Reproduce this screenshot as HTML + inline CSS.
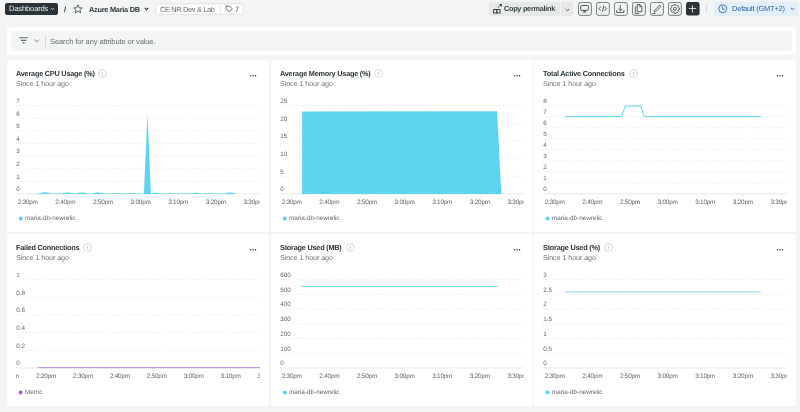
<!DOCTYPE html>
<html><head><meta charset="utf-8"><style>
html,body{margin:0;padding:0;}
body{text-rendering:geometricPrecision;width:800px;height:412px;overflow:hidden;background:#f3f4f4;position:relative;font-family:"Liberation Sans", sans-serif;}
.t{position:absolute;white-space:nowrap;will-change:transform;}
.box{position:absolute;}
.ic{position:absolute;overflow:hidden;will-change:transform;}
</style></head><body>
<div class="box" style="left:5px;top:3.1px;width:53.1px;height:11.5px;background:#293338;border-radius:2px"></div>
<div class="t" style="left:9.00px;top:5.37px;font-size:7.6px;line-height:7.6px;color:#eef0f0;font-weight:400;letter-spacing:-0.17px;">Dashboards</div>
<svg class="ic" style="left:50px;top:7px" width="5" height="4" viewBox="0 0 5 4"><path d="M1 1.2 L2.5 2.7 L4 1.2" fill="none" stroke="#fff" stroke-width="0.8"/></svg>
<div class="t" style="left:63.60px;top:5.57px;font-size:7.6px;line-height:7.6px;color:#293338;font-weight:700;letter-spacing:0px;">/</div>
<svg class="ic" style="left:72.5px;top:4.2px" width="10" height="10" viewBox="0 0 24 24"><path d="M12 2 L14.9 8.9 L22.2 9.4 L16.6 14.1 L18.4 21.4 L12 17.4 L5.6 21.4 L7.4 14.1 L1.8 9.4 L9.1 8.9 Z" fill="none" stroke="#293338" stroke-width="1.7" stroke-linejoin="round"/></svg>
<div class="t" style="left:89.00px;top:5.62px;font-size:7.3px;line-height:7.3px;color:#293338;font-weight:700;letter-spacing:-0.22px;">Azure Maria DB</div>
<svg class="ic" style="left:143.5px;top:7px" width="5" height="4" viewBox="0 0 5 4"><path d="M0.8 1 L2.5 2.8 L4.2 1" fill="none" stroke="#293338" stroke-width="1.1"/></svg>
<svg class="ic" style="left:155px;top:3px" width="89" height="12" viewBox="0 0 89 12"><rect x="0.8" y="0.75" width="87.5" height="10.5" rx="1.5" fill="#fff" stroke="#d9dcdc" stroke-width="0.8"/><path d="M65.5 2.2 V9.5" stroke="#dcdfdf" stroke-width="0.8"/><path d="M71.0 3.0 H74.5 L77.3 5.9 L74.3 8.8 L71.0 5.6 Z" fill="none" stroke="#5a6366" stroke-width="0.9" stroke-linejoin="round"/></svg>
<div class="t" style="left:160.00px;top:5.74px;font-size:7.4px;line-height:7.4px;color:#646c6f;font-weight:400;letter-spacing:-0.33px;">CE NR Dev &amp; Lab</div>
<div class="t" style="left:234.60px;top:5.57px;font-size:7.6px;line-height:7.6px;color:#5a6366;font-weight:400;letter-spacing:0px;">7</div>
<div class="box" style="left:489px;top:2.25px;width:84px;height:13.6px;background:#e7e9e9;border-radius:2.5px"></div>
<div class="box" style="left:559.7px;top:2.25px;width:0.7px;height:13.6px;background:#f3f4f4"></div>
<svg class="ic" style="left:490px;top:2px" width="14" height="14" viewBox="0 0 14 14"><rect x="3.6" y="7.5" width="3.2" height="3.5" fill="none" stroke="#3a4448" stroke-width="1"/><rect x="6.8" y="7.5" width="3.2" height="3.5" fill="none" stroke="#3a4448" stroke-width="1"/><path d="M8.1 5.7 L10.9 2.9" stroke="#3a4448" stroke-width="0.9"/><path d="M9.0 2.2 L11.9 2.1 L11.8 5.0 Z" fill="#3a4448"/></svg>
<div class="t" style="left:504.40px;top:5.42px;font-size:7.3px;line-height:7.3px;color:#3a4448;font-weight:700;letter-spacing:-0.27px;">Copy permalink</div>
<svg class="ic" style="left:564.5px;top:7.5px" width="5" height="4" viewBox="0 0 5 4"><path d="M0.8 1 L2.5 2.7 L4.2 1" fill="none" stroke="#3a4448" stroke-width="0.9"/></svg>
<svg class="ic" style="left:578.0px;top:2px" width="14" height="14" viewBox="0 0 14 14"><rect x="0.45" y="0.45" width="12.9" height="12.9" rx="2.2" fill="none" stroke="#6b7171" stroke-width="0.9"/><rect x="2.75" y="3.55" width="7.6" height="4.8" rx="0.7" fill="none" stroke="#4a5356" stroke-width="1"/><path d="M4.3 10.6 L6.55 8.6 L8.8 10.6 Z" fill="#4a5356"/></svg>
<svg class="ic" style="left:596.0px;top:2px" width="14" height="14" viewBox="0 0 14 14"><rect x="0.45" y="0.45" width="12.9" height="12.9" rx="2.2" fill="none" stroke="#6b7171" stroke-width="0.9"/><path d="M4.9 4.6 L2.9 6.7 L4.9 8.8 M8.5 4.6 L10.5 6.7 L8.5 8.8 M7.7 3.6 L6.5 9.7" fill="none" stroke="#4a5356" stroke-width="0.95"/></svg>
<svg class="ic" style="left:614.1px;top:2px" width="14" height="14" viewBox="0 0 14 14"><rect x="0.45" y="0.45" width="12.9" height="12.9" rx="2.2" fill="none" stroke="#6b7171" stroke-width="0.9"/><path d="M6.25 3.2 V8.6 M4.4 6.8 L6.25 8.65 L8.1 6.8 M2.7 8 V10.4 H9.95 V8" fill="none" stroke="#4a5356" stroke-width="0.95"/></svg>
<svg class="ic" style="left:632.0px;top:2px" width="14" height="14" viewBox="0 0 14 14"><rect x="0.45" y="0.45" width="12.9" height="12.9" rx="2.2" fill="none" stroke="#6b7171" stroke-width="0.9"/><path d="M5.2 2.55 H7.8 L9.9 4.65 V9.7 H5.2 Z M7.8 2.55 V4.65 H9.9" fill="none" stroke="#4a5356" stroke-width="0.95" stroke-linejoin="round"/><path d="M3.25 4.3 V11.6 H7.2" fill="none" stroke="#4a5356" stroke-width="0.9"/></svg>
<svg class="ic" style="left:650.1px;top:2px" width="14" height="14" viewBox="0 0 14 14"><rect x="0.45" y="0.45" width="12.9" height="12.9" rx="2.2" fill="none" stroke="#6b7171" stroke-width="0.9"/><path d="M4.1 10.0 L4.5 8.3 L9.7 3.1 L11.0 4.4 L5.8 9.6 Z" fill="none" stroke="#4a5356" stroke-width="0.9" stroke-linejoin="round"/><path d="M2.3 11.5 H5.4" stroke="#4a5356" stroke-width="0.9"/></svg>
<svg class="ic" style="left:668.0px;top:2px" width="14" height="14" viewBox="0 0 14 14"><rect x="0.45" y="0.45" width="12.9" height="12.9" rx="2.2" fill="none" stroke="#6b7171" stroke-width="0.9"/><path d="M10.29 5.85 L11.38 6.13 L11.38 7.67 L10.29 7.95 L10.04 8.56 L10.62 9.53 L9.53 10.62 L8.56 10.04 L7.95 10.29 L7.67 11.38 L6.13 11.38 L5.85 10.29 L5.24 10.04 L4.27 10.62 L3.18 9.53 L3.76 8.56 L3.51 7.95 L2.42 7.67 L2.42 6.13 L3.51 5.85 L3.76 5.24 L3.18 4.27 L4.27 3.18 L5.24 3.76 L5.85 3.51 L6.13 2.42 L7.67 2.42 L7.95 3.51 L8.56 3.76 L9.53 3.18 L10.62 4.27 L10.04 5.24 Z" fill="none" stroke="#4a5356" stroke-width="0.9" stroke-linejoin="round"/><circle cx="6.9" cy="6.9" r="1.5" fill="none" stroke="#4a5356" stroke-width="0.9"/></svg>
<svg class="ic" style="left:686.1px;top:2.05px" width="14" height="14" viewBox="0 0 14 14"><rect x="0" y="0" width="13.6" height="13.55" rx="2.4" fill="#293338"/><path d="M6.45 3.2 V10.7 M2.9 6.45 H10.1" stroke="#e8eaea" stroke-width="0.9"/></svg>
<div class="box" style="left:706.2px;top:4.5px;width:0.7px;height:8.5px;background:#d6d9d9"></div>
<div class="box" style="left:714px;top:2.25px;width:84px;height:13.3px;background:#e3eefb;border-radius:2.5px"></div>
<svg class="ic" style="left:717.5px;top:3.9px" width="9.5" height="9.5" viewBox="0 0 20 20"><circle cx="10" cy="10" r="8.3" fill="none" stroke="#2f64a8" stroke-width="1.8"/><path d="M9.5 5 V11 H14" fill="none" stroke="#2f64a8" stroke-width="1.8"/></svg>
<div class="t" style="left:732.00px;top:5.04px;font-size:7.4px;line-height:7.4px;color:#2f5f9f;font-weight:400;letter-spacing:-0.16px;">Default (GMT+2)</div>
<svg class="ic" style="left:789.5px;top:7px" width="5" height="4" viewBox="0 0 5 4"><path d="M0.8 1 L2.5 2.7 L4.2 1" fill="none" stroke="#2f5f9f" stroke-width="0.9"/></svg>
<div class="box" style="left:7px;top:27px;width:789px;height:27.8px;background:#fff;border-radius:3px"></div>
<div class="box" style="left:11px;top:31px;width:780.5px;height:20px;background:#f3f4f4;border-radius:2px"></div>
<svg class="ic" style="left:18.5px;top:37px" width="9" height="7" viewBox="0 0 9 7"><path d="M0.2 0.75 H9 M1.9 3.3 H7.3 M3.5 5.85 H5.7" stroke="#646c6f" stroke-width="1.2"/></svg>
<svg class="ic" style="left:34px;top:39px" width="5.5" height="3.5" viewBox="0 0 5.5 3.5"><path d="M0.4 0.5 L2.75 2.9 L5.1 0.5" fill="none" stroke="#5a6366" stroke-width="0.8"/></svg>
<div class="box" style="left:45.4px;top:34.5px;width:0.8px;height:13px;background:#dcdfdf"></div>
<div class="t" style="left:49.50px;top:37.77px;font-size:7.6px;line-height:7.6px;color:#6b7274;font-weight:400;letter-spacing:-0.14px;">Search for any attribute or value.</div>
<div class="box" style="left:7.0px;top:59.75px;width:261.8px;height:172.0px;background:#fff;border-radius:3px"></div>
<div class="t" style="left:16.00px;top:69.87px;font-size:7.3px;line-height:7.3px;color:#293338;font-weight:700;letter-spacing:-0.22px;">Average CPU Usage (%)</div>
<svg class="ic" style="left:98.03px;top:68.60px" width="9" height="9" viewBox="0 0 9 9"><circle cx="4.5" cy="4.5" r="3.95" fill="none" stroke="#c9cdcd" stroke-width="0.75"/><path d="M4.4 2.85 V6.5" stroke="#bfc3c3" stroke-width="0.85"/></svg>
<div class="t" style="left:16.00px;top:80.84px;font-size:7.1px;line-height:7.1px;color:#6b7274;font-weight:400;letter-spacing:-0.05px;">Since 1 hour ago</div>
<svg class="ic" style="left:248.00px;top:72.50px" width="10" height="5" viewBox="0 0 10 5"><circle cx="2.6" cy="2.65" r="0.75" fill="#293338"/><circle cx="5.05" cy="2.65" r="0.75" fill="#293338"/><circle cx="7.5" cy="2.65" r="0.75" fill="#293338"/></svg>
<svg class="ic" style="left:16.0px;top:97.75px;font-family:"Liberation Sans", sans-serif" width="244" height="112" viewBox="0 0 244 112"><line x1="0" y1="7.60" x2="243.5" y2="7.60" stroke="#e2e5e5" stroke-width="0.9" stroke-dasharray="1.1 2.23" stroke-dashoffset="0.5"/><text x="0.3" y="5.00" font-size="6.3" fill="#5f676a">7</text><line x1="0" y1="20.22" x2="243.5" y2="20.22" stroke="#e2e5e5" stroke-width="0.9" stroke-dasharray="1.1 2.23" stroke-dashoffset="0.5"/><text x="0.3" y="17.62" font-size="6.3" fill="#5f676a">6</text><line x1="0" y1="32.84" x2="243.5" y2="32.84" stroke="#e2e5e5" stroke-width="0.9" stroke-dasharray="1.1 2.23" stroke-dashoffset="0.5"/><text x="0.3" y="30.24" font-size="6.3" fill="#5f676a">5</text><line x1="0" y1="45.46" x2="243.5" y2="45.46" stroke="#e2e5e5" stroke-width="0.9" stroke-dasharray="1.1 2.23" stroke-dashoffset="0.5"/><text x="0.3" y="42.86" font-size="6.3" fill="#5f676a">4</text><line x1="0" y1="58.09" x2="243.5" y2="58.09" stroke="#e2e5e5" stroke-width="0.9" stroke-dasharray="1.1 2.23" stroke-dashoffset="0.5"/><text x="0.3" y="55.49" font-size="6.3" fill="#5f676a">3</text><line x1="0" y1="70.71" x2="243.5" y2="70.71" stroke="#e2e5e5" stroke-width="0.9" stroke-dasharray="1.1 2.23" stroke-dashoffset="0.5"/><text x="0.3" y="68.11" font-size="6.3" fill="#5f676a">2</text><line x1="0" y1="83.33" x2="243.5" y2="83.33" stroke="#e2e5e5" stroke-width="0.9" stroke-dasharray="1.1 2.23" stroke-dashoffset="0.5"/><text x="0.3" y="80.73" font-size="6.3" fill="#5f676a">1</text><line x1="0" y1="95.95" x2="243.5" y2="95.95" stroke="#e6e8e8" stroke-width="1"/><text x="0.3" y="93.35" font-size="6.3" fill="#5f676a">0</text><line x1="11.70" y1="96.45" x2="11.70" y2="97.95" stroke="#e0e3e3" stroke-width="0.6"/><text x="11.70" y="106.35" font-size="6.4" fill="#5f676a" text-anchor="middle" letter-spacing="-0.22">2:30pm</text><line x1="49.33" y1="96.45" x2="49.33" y2="97.95" stroke="#e0e3e3" stroke-width="0.6"/><text x="49.33" y="106.35" font-size="6.4" fill="#5f676a" text-anchor="middle" letter-spacing="-0.22">2:40pm</text><line x1="86.96" y1="96.45" x2="86.96" y2="97.95" stroke="#e0e3e3" stroke-width="0.6"/><text x="86.96" y="106.35" font-size="6.4" fill="#5f676a" text-anchor="middle" letter-spacing="-0.22">2:50pm</text><line x1="124.59" y1="96.45" x2="124.59" y2="97.95" stroke="#e0e3e3" stroke-width="0.6"/><text x="124.59" y="106.35" font-size="6.4" fill="#5f676a" text-anchor="middle" letter-spacing="-0.22">3:00pm</text><line x1="162.22" y1="96.45" x2="162.22" y2="97.95" stroke="#e0e3e3" stroke-width="0.6"/><text x="162.22" y="106.35" font-size="6.4" fill="#5f676a" text-anchor="middle" letter-spacing="-0.22">3:10pm</text><line x1="199.85" y1="96.45" x2="199.85" y2="97.95" stroke="#e0e3e3" stroke-width="0.6"/><text x="199.85" y="106.35" font-size="6.4" fill="#5f676a" text-anchor="middle" letter-spacing="-0.22">3:20pm</text><line x1="237.48" y1="96.45" x2="237.48" y2="97.95" stroke="#e0e3e3" stroke-width="0.6"/><text x="237.48" y="106.35" font-size="6.4" fill="#5f676a" text-anchor="middle" letter-spacing="-0.22">3:30pm</text><path d="M20.00 95.95 L23.00 95.60 Q29.00 93.09 35.00 95.60 L45.70 95.60 Q51.70 93.31 57.70 95.60 L59.70 95.60 Q65.70 93.31 71.70 95.60 L76.00 95.60 Q82.00 93.31 88.00 95.60 L94.00 95.60 Q100.00 94.19 106.00 95.60 L110.50 95.60 Q116.50 94.41 122.50 95.60 L127.90 95.55 L131.50 16.25 L134.90 95.55 L135.40 95.60 Q140.40 93.75 145.40 95.60 L150.25 95.60 Q155.25 94.19 160.25 95.60 L174.50 95.60 Q179.50 93.75 184.50 95.60 L189.30 95.60 Q194.30 94.41 199.30 95.60 L208.80 95.60 Q213.80 93.53 218.80 95.60 L220.00 95.95 Z" fill="#5dd3ef"/></svg>
<svg class="ic" style="left:18.00px;top:215.75px" width="6" height="6" viewBox="0 0 6 6"><circle cx="2.6" cy="2.55" r="2" fill="#5dd3ef"/></svg>
<div class="t" style="left:25.10px;top:215.52px;font-size:6.3px;line-height:6.3px;color:#5f676a;font-weight:400;letter-spacing:0.03px;">maria-db-newrelic</div>
<div class="box" style="left:270.9px;top:59.75px;width:261.8px;height:172.0px;background:#fff;border-radius:3px"></div>
<div class="t" style="left:279.90px;top:69.87px;font-size:7.3px;line-height:7.3px;color:#293338;font-weight:700;letter-spacing:-0.22px;">Average Memory Usage (%)</div>
<svg class="ic" style="left:374.23px;top:68.60px" width="9" height="9" viewBox="0 0 9 9"><circle cx="4.5" cy="4.5" r="3.95" fill="none" stroke="#c9cdcd" stroke-width="0.75"/><path d="M4.4 2.85 V6.5" stroke="#bfc3c3" stroke-width="0.85"/></svg>
<div class="t" style="left:279.90px;top:80.84px;font-size:7.1px;line-height:7.1px;color:#6b7274;font-weight:400;letter-spacing:-0.05px;">Since 1 hour ago</div>
<svg class="ic" style="left:511.90px;top:72.50px" width="10" height="5" viewBox="0 0 10 5"><circle cx="2.6" cy="2.65" r="0.75" fill="#293338"/><circle cx="5.05" cy="2.65" r="0.75" fill="#293338"/><circle cx="7.5" cy="2.65" r="0.75" fill="#293338"/></svg>
<svg class="ic" style="left:279.9px;top:97.75px;font-family:"Liberation Sans", sans-serif" width="244" height="112" viewBox="0 0 244 112"><line x1="0" y1="7.60" x2="243.5" y2="7.60" stroke="#e2e5e5" stroke-width="0.9" stroke-dasharray="1.1 2.23" stroke-dashoffset="0.5"/><text x="0.3" y="5.00" font-size="6.3" fill="#5f676a">25</text><line x1="0" y1="25.27" x2="243.5" y2="25.27" stroke="#e2e5e5" stroke-width="0.9" stroke-dasharray="1.1 2.23" stroke-dashoffset="0.5"/><text x="0.3" y="22.67" font-size="6.3" fill="#5f676a">20</text><line x1="0" y1="42.94" x2="243.5" y2="42.94" stroke="#e2e5e5" stroke-width="0.9" stroke-dasharray="1.1 2.23" stroke-dashoffset="0.5"/><text x="0.3" y="40.34" font-size="6.3" fill="#5f676a">15</text><line x1="0" y1="60.61" x2="243.5" y2="60.61" stroke="#e2e5e5" stroke-width="0.9" stroke-dasharray="1.1 2.23" stroke-dashoffset="0.5"/><text x="0.3" y="58.01" font-size="6.3" fill="#5f676a">10</text><line x1="0" y1="78.28" x2="243.5" y2="78.28" stroke="#e2e5e5" stroke-width="0.9" stroke-dasharray="1.1 2.23" stroke-dashoffset="0.5"/><text x="0.3" y="75.68" font-size="6.3" fill="#5f676a">5</text><line x1="0" y1="95.95" x2="243.5" y2="95.95" stroke="#e6e8e8" stroke-width="1"/><text x="0.3" y="93.35" font-size="6.3" fill="#5f676a">0</text><line x1="11.70" y1="96.45" x2="11.70" y2="97.95" stroke="#e0e3e3" stroke-width="0.6"/><text x="11.70" y="106.35" font-size="6.4" fill="#5f676a" text-anchor="middle" letter-spacing="-0.22">2:30pm</text><line x1="49.33" y1="96.45" x2="49.33" y2="97.95" stroke="#e0e3e3" stroke-width="0.6"/><text x="49.33" y="106.35" font-size="6.4" fill="#5f676a" text-anchor="middle" letter-spacing="-0.22">2:40pm</text><line x1="86.96" y1="96.45" x2="86.96" y2="97.95" stroke="#e0e3e3" stroke-width="0.6"/><text x="86.96" y="106.35" font-size="6.4" fill="#5f676a" text-anchor="middle" letter-spacing="-0.22">2:50pm</text><line x1="124.59" y1="96.45" x2="124.59" y2="97.95" stroke="#e0e3e3" stroke-width="0.6"/><text x="124.59" y="106.35" font-size="6.4" fill="#5f676a" text-anchor="middle" letter-spacing="-0.22">3:00pm</text><line x1="162.22" y1="96.45" x2="162.22" y2="97.95" stroke="#e0e3e3" stroke-width="0.6"/><text x="162.22" y="106.35" font-size="6.4" fill="#5f676a" text-anchor="middle" letter-spacing="-0.22">3:10pm</text><line x1="199.85" y1="96.45" x2="199.85" y2="97.95" stroke="#e0e3e3" stroke-width="0.6"/><text x="199.85" y="106.35" font-size="6.4" fill="#5f676a" text-anchor="middle" letter-spacing="-0.22">3:20pm</text><line x1="237.48" y1="96.45" x2="237.48" y2="97.95" stroke="#e0e3e3" stroke-width="0.6"/><text x="237.48" y="106.35" font-size="6.4" fill="#5f676a" text-anchor="middle" letter-spacing="-0.22">3:30pm</text><path d="M22.10 95.95 L22.10 13.55 L217.10 13.25 L221.30 95.95 Z" fill="#5dd3ef"/></svg>
<svg class="ic" style="left:281.90px;top:215.75px" width="6" height="6" viewBox="0 0 6 6"><circle cx="2.6" cy="2.55" r="2" fill="#5dd3ef"/></svg>
<div class="t" style="left:289.00px;top:215.52px;font-size:6.3px;line-height:6.3px;color:#5f676a;font-weight:400;letter-spacing:0.03px;">maria-db-newrelic</div>
<div class="box" style="left:534.2px;top:59.75px;width:261.8px;height:172.0px;background:#fff;border-radius:3px"></div>
<div class="t" style="left:543.20px;top:69.87px;font-size:7.3px;line-height:7.3px;color:#293338;font-weight:700;letter-spacing:-0.22px;">Total Active Connections</div>
<svg class="ic" style="left:628.93px;top:68.60px" width="9" height="9" viewBox="0 0 9 9"><circle cx="4.5" cy="4.5" r="3.95" fill="none" stroke="#c9cdcd" stroke-width="0.75"/><path d="M4.4 2.85 V6.5" stroke="#bfc3c3" stroke-width="0.85"/></svg>
<div class="t" style="left:543.20px;top:80.84px;font-size:7.1px;line-height:7.1px;color:#6b7274;font-weight:400;letter-spacing:-0.05px;">Since 1 hour ago</div>
<svg class="ic" style="left:775.20px;top:72.50px" width="10" height="5" viewBox="0 0 10 5"><circle cx="2.6" cy="2.65" r="0.75" fill="#293338"/><circle cx="5.05" cy="2.65" r="0.75" fill="#293338"/><circle cx="7.5" cy="2.65" r="0.75" fill="#293338"/></svg>
<svg class="ic" style="left:543.2px;top:97.75px;font-family:"Liberation Sans", sans-serif" width="244" height="112" viewBox="0 0 244 112"><line x1="0" y1="7.60" x2="243.5" y2="7.60" stroke="#e2e5e5" stroke-width="0.9" stroke-dasharray="1.1 2.23" stroke-dashoffset="0.5"/><text x="0.3" y="5.00" font-size="6.3" fill="#5f676a">8</text><line x1="0" y1="18.64" x2="243.5" y2="18.64" stroke="#e2e5e5" stroke-width="0.9" stroke-dasharray="1.1 2.23" stroke-dashoffset="0.5"/><text x="0.3" y="16.04" font-size="6.3" fill="#5f676a">7</text><line x1="0" y1="29.69" x2="243.5" y2="29.69" stroke="#e2e5e5" stroke-width="0.9" stroke-dasharray="1.1 2.23" stroke-dashoffset="0.5"/><text x="0.3" y="27.09" font-size="6.3" fill="#5f676a">6</text><line x1="0" y1="40.73" x2="243.5" y2="40.73" stroke="#e2e5e5" stroke-width="0.9" stroke-dasharray="1.1 2.23" stroke-dashoffset="0.5"/><text x="0.3" y="38.13" font-size="6.3" fill="#5f676a">5</text><line x1="0" y1="51.77" x2="243.5" y2="51.77" stroke="#e2e5e5" stroke-width="0.9" stroke-dasharray="1.1 2.23" stroke-dashoffset="0.5"/><text x="0.3" y="49.17" font-size="6.3" fill="#5f676a">4</text><line x1="0" y1="62.82" x2="243.5" y2="62.82" stroke="#e2e5e5" stroke-width="0.9" stroke-dasharray="1.1 2.23" stroke-dashoffset="0.5"/><text x="0.3" y="60.22" font-size="6.3" fill="#5f676a">3</text><line x1="0" y1="73.86" x2="243.5" y2="73.86" stroke="#e2e5e5" stroke-width="0.9" stroke-dasharray="1.1 2.23" stroke-dashoffset="0.5"/><text x="0.3" y="71.26" font-size="6.3" fill="#5f676a">2</text><line x1="0" y1="84.91" x2="243.5" y2="84.91" stroke="#e2e5e5" stroke-width="0.9" stroke-dasharray="1.1 2.23" stroke-dashoffset="0.5"/><text x="0.3" y="82.31" font-size="6.3" fill="#5f676a">1</text><line x1="0" y1="95.95" x2="243.5" y2="95.95" stroke="#e6e8e8" stroke-width="1"/><text x="0.3" y="93.35" font-size="6.3" fill="#5f676a">0</text><line x1="11.70" y1="96.45" x2="11.70" y2="97.95" stroke="#e0e3e3" stroke-width="0.6"/><text x="11.70" y="106.35" font-size="6.4" fill="#5f676a" text-anchor="middle" letter-spacing="-0.22">2:30pm</text><line x1="49.33" y1="96.45" x2="49.33" y2="97.95" stroke="#e0e3e3" stroke-width="0.6"/><text x="49.33" y="106.35" font-size="6.4" fill="#5f676a" text-anchor="middle" letter-spacing="-0.22">2:40pm</text><line x1="86.96" y1="96.45" x2="86.96" y2="97.95" stroke="#e0e3e3" stroke-width="0.6"/><text x="86.96" y="106.35" font-size="6.4" fill="#5f676a" text-anchor="middle" letter-spacing="-0.22">2:50pm</text><line x1="124.59" y1="96.45" x2="124.59" y2="97.95" stroke="#e0e3e3" stroke-width="0.6"/><text x="124.59" y="106.35" font-size="6.4" fill="#5f676a" text-anchor="middle" letter-spacing="-0.22">3:00pm</text><line x1="162.22" y1="96.45" x2="162.22" y2="97.95" stroke="#e0e3e3" stroke-width="0.6"/><text x="162.22" y="106.35" font-size="6.4" fill="#5f676a" text-anchor="middle" letter-spacing="-0.22">3:10pm</text><line x1="199.85" y1="96.45" x2="199.85" y2="97.95" stroke="#e0e3e3" stroke-width="0.6"/><text x="199.85" y="106.35" font-size="6.4" fill="#5f676a" text-anchor="middle" letter-spacing="-0.22">3:20pm</text><line x1="237.48" y1="96.45" x2="237.48" y2="97.95" stroke="#e0e3e3" stroke-width="0.6"/><text x="237.48" y="106.35" font-size="6.4" fill="#5f676a" text-anchor="middle" letter-spacing="-0.22">3:30pm</text><path d="M21.80 18.64 L78.70 18.64 L82.30 7.90 L97.70 7.90 L101.30 18.64 L218.00 18.64" fill="none" stroke="#5dd3ef" stroke-width="1"/></svg>
<svg class="ic" style="left:545.20px;top:215.75px" width="6" height="6" viewBox="0 0 6 6"><circle cx="2.6" cy="2.55" r="2" fill="#5dd3ef"/></svg>
<div class="t" style="left:552.30px;top:215.52px;font-size:6.3px;line-height:6.3px;color:#5f676a;font-weight:400;letter-spacing:0.03px;">maria-db-newrelic</div>
<div class="box" style="left:7.0px;top:233.9px;width:261.8px;height:172.0px;background:#fff;border-radius:3px"></div>
<div class="t" style="left:16.00px;top:244.02px;font-size:7.3px;line-height:7.3px;color:#293338;font-weight:700;letter-spacing:-0.22px;">Failed Connections</div>
<svg class="ic" style="left:82.93px;top:242.75px" width="9" height="9" viewBox="0 0 9 9"><circle cx="4.5" cy="4.5" r="3.95" fill="none" stroke="#c9cdcd" stroke-width="0.75"/><path d="M4.4 2.85 V6.5" stroke="#bfc3c3" stroke-width="0.85"/></svg>
<div class="t" style="left:16.00px;top:254.99px;font-size:7.1px;line-height:7.1px;color:#6b7274;font-weight:400;letter-spacing:-0.05px;">Since 1 hour ago</div>
<svg class="ic" style="left:248.00px;top:246.65px" width="10" height="5" viewBox="0 0 10 5"><circle cx="2.6" cy="2.65" r="0.75" fill="#293338"/><circle cx="5.05" cy="2.65" r="0.75" fill="#293338"/><circle cx="7.5" cy="2.65" r="0.75" fill="#293338"/></svg>
<svg class="ic" style="left:16.0px;top:271.9px;font-family:"Liberation Sans", sans-serif" width="244" height="112" viewBox="0 0 244 112"><line x1="0" y1="7.60" x2="243.5" y2="7.60" stroke="#e2e5e5" stroke-width="0.9" stroke-dasharray="1.1 2.23" stroke-dashoffset="0.5"/><text x="0.3" y="5.00" font-size="6.3" fill="#5f676a">1</text><line x1="0" y1="25.27" x2="243.5" y2="25.27" stroke="#e2e5e5" stroke-width="0.9" stroke-dasharray="1.1 2.23" stroke-dashoffset="0.5"/><text x="0.3" y="22.67" font-size="6.3" fill="#5f676a">0.8</text><line x1="0" y1="42.94" x2="243.5" y2="42.94" stroke="#e2e5e5" stroke-width="0.9" stroke-dasharray="1.1 2.23" stroke-dashoffset="0.5"/><text x="0.3" y="40.34" font-size="6.3" fill="#5f676a">0.6</text><line x1="0" y1="60.61" x2="243.5" y2="60.61" stroke="#e2e5e5" stroke-width="0.9" stroke-dasharray="1.1 2.23" stroke-dashoffset="0.5"/><text x="0.3" y="58.01" font-size="6.3" fill="#5f676a">0.4</text><line x1="0" y1="78.28" x2="243.5" y2="78.28" stroke="#e2e5e5" stroke-width="0.9" stroke-dasharray="1.1 2.23" stroke-dashoffset="0.5"/><text x="0.3" y="75.68" font-size="6.3" fill="#5f676a">0.2</text><line x1="0" y1="95.95" x2="243.5" y2="95.95" stroke="#e6e8e8" stroke-width="1"/><text x="0.3" y="93.35" font-size="6.3" fill="#5f676a">0</text><line x1="-6.80" y1="96.45" x2="-6.80" y2="97.95" stroke="#e0e3e3" stroke-width="0.6"/><text x="-6.80" y="106.35" font-size="6.4" fill="#5f676a" text-anchor="middle" letter-spacing="-0.22">2:10pm</text><line x1="30.10" y1="96.45" x2="30.10" y2="97.95" stroke="#e0e3e3" stroke-width="0.6"/><text x="30.10" y="106.35" font-size="6.4" fill="#5f676a" text-anchor="middle" letter-spacing="-0.22">2:20pm</text><line x1="67.00" y1="96.45" x2="67.00" y2="97.95" stroke="#e0e3e3" stroke-width="0.6"/><text x="67.00" y="106.35" font-size="6.4" fill="#5f676a" text-anchor="middle" letter-spacing="-0.22">2:30pm</text><line x1="103.90" y1="96.45" x2="103.90" y2="97.95" stroke="#e0e3e3" stroke-width="0.6"/><text x="103.90" y="106.35" font-size="6.4" fill="#5f676a" text-anchor="middle" letter-spacing="-0.22">2:40pm</text><line x1="140.80" y1="96.45" x2="140.80" y2="97.95" stroke="#e0e3e3" stroke-width="0.6"/><text x="140.80" y="106.35" font-size="6.4" fill="#5f676a" text-anchor="middle" letter-spacing="-0.22">2:50pm</text><line x1="177.70" y1="96.45" x2="177.70" y2="97.95" stroke="#e0e3e3" stroke-width="0.6"/><text x="177.70" y="106.35" font-size="6.4" fill="#5f676a" text-anchor="middle" letter-spacing="-0.22">3:00pm</text><line x1="214.60" y1="96.45" x2="214.60" y2="97.95" stroke="#e0e3e3" stroke-width="0.6"/><text x="214.60" y="106.35" font-size="6.4" fill="#5f676a" text-anchor="middle" letter-spacing="-0.22">3:10pm</text><line x1="251.50" y1="96.45" x2="251.50" y2="97.95" stroke="#e0e3e3" stroke-width="0.6"/><text x="251.50" y="106.35" font-size="6.4" fill="#5f676a" text-anchor="middle" letter-spacing="-0.22">3:20pm</text><line x1="21.90" y1="95.65" x2="243.90" y2="95.65" stroke="#b385d8" stroke-width="0.95"/></svg>
<svg class="ic" style="left:18.00px;top:389.90px" width="6" height="6" viewBox="0 0 6 6"><circle cx="2.6" cy="2.55" r="2" fill="#a95fd2"/></svg>
<div class="t" style="left:25.10px;top:389.67px;font-size:6.3px;line-height:6.3px;color:#5f676a;font-weight:400;letter-spacing:0.03px;">Metric</div>
<div class="box" style="left:270.9px;top:233.9px;width:261.8px;height:172.0px;background:#fff;border-radius:3px"></div>
<div class="t" style="left:279.90px;top:244.02px;font-size:7.3px;line-height:7.3px;color:#293338;font-weight:700;letter-spacing:-0.22px;">Storage Used (MB)</div>
<svg class="ic" style="left:345.73px;top:242.75px" width="9" height="9" viewBox="0 0 9 9"><circle cx="4.5" cy="4.5" r="3.95" fill="none" stroke="#c9cdcd" stroke-width="0.75"/><path d="M4.4 2.85 V6.5" stroke="#bfc3c3" stroke-width="0.85"/></svg>
<div class="t" style="left:279.90px;top:254.99px;font-size:7.1px;line-height:7.1px;color:#6b7274;font-weight:400;letter-spacing:-0.05px;">Since 1 hour ago</div>
<svg class="ic" style="left:511.90px;top:246.65px" width="10" height="5" viewBox="0 0 10 5"><circle cx="2.6" cy="2.65" r="0.75" fill="#293338"/><circle cx="5.05" cy="2.65" r="0.75" fill="#293338"/><circle cx="7.5" cy="2.65" r="0.75" fill="#293338"/></svg>
<svg class="ic" style="left:279.9px;top:271.9px;font-family:"Liberation Sans", sans-serif" width="244" height="112" viewBox="0 0 244 112"><line x1="0" y1="7.60" x2="243.5" y2="7.60" stroke="#e2e5e5" stroke-width="0.9" stroke-dasharray="1.1 2.23" stroke-dashoffset="0.5"/><text x="0.3" y="5.00" font-size="6.3" fill="#5f676a">600</text><line x1="0" y1="22.33" x2="243.5" y2="22.33" stroke="#e2e5e5" stroke-width="0.9" stroke-dasharray="1.1 2.23" stroke-dashoffset="0.5"/><text x="0.3" y="19.73" font-size="6.3" fill="#5f676a">500</text><line x1="0" y1="37.05" x2="243.5" y2="37.05" stroke="#e2e5e5" stroke-width="0.9" stroke-dasharray="1.1 2.23" stroke-dashoffset="0.5"/><text x="0.3" y="34.45" font-size="6.3" fill="#5f676a">400</text><line x1="0" y1="51.77" x2="243.5" y2="51.77" stroke="#e2e5e5" stroke-width="0.9" stroke-dasharray="1.1 2.23" stroke-dashoffset="0.5"/><text x="0.3" y="49.17" font-size="6.3" fill="#5f676a">300</text><line x1="0" y1="66.50" x2="243.5" y2="66.50" stroke="#e2e5e5" stroke-width="0.9" stroke-dasharray="1.1 2.23" stroke-dashoffset="0.5"/><text x="0.3" y="63.90" font-size="6.3" fill="#5f676a">200</text><line x1="0" y1="81.22" x2="243.5" y2="81.22" stroke="#e2e5e5" stroke-width="0.9" stroke-dasharray="1.1 2.23" stroke-dashoffset="0.5"/><text x="0.3" y="78.62" font-size="6.3" fill="#5f676a">100</text><line x1="0" y1="95.95" x2="243.5" y2="95.95" stroke="#e6e8e8" stroke-width="1"/><text x="0.3" y="93.35" font-size="6.3" fill="#5f676a">0</text><line x1="11.70" y1="96.45" x2="11.70" y2="97.95" stroke="#e0e3e3" stroke-width="0.6"/><text x="11.70" y="106.35" font-size="6.4" fill="#5f676a" text-anchor="middle" letter-spacing="-0.22">2:30pm</text><line x1="49.33" y1="96.45" x2="49.33" y2="97.95" stroke="#e0e3e3" stroke-width="0.6"/><text x="49.33" y="106.35" font-size="6.4" fill="#5f676a" text-anchor="middle" letter-spacing="-0.22">2:40pm</text><line x1="86.96" y1="96.45" x2="86.96" y2="97.95" stroke="#e0e3e3" stroke-width="0.6"/><text x="86.96" y="106.35" font-size="6.4" fill="#5f676a" text-anchor="middle" letter-spacing="-0.22">2:50pm</text><line x1="124.59" y1="96.45" x2="124.59" y2="97.95" stroke="#e0e3e3" stroke-width="0.6"/><text x="124.59" y="106.35" font-size="6.4" fill="#5f676a" text-anchor="middle" letter-spacing="-0.22">3:00pm</text><line x1="162.22" y1="96.45" x2="162.22" y2="97.95" stroke="#e0e3e3" stroke-width="0.6"/><text x="162.22" y="106.35" font-size="6.4" fill="#5f676a" text-anchor="middle" letter-spacing="-0.22">3:10pm</text><line x1="199.85" y1="96.45" x2="199.85" y2="97.95" stroke="#e0e3e3" stroke-width="0.6"/><text x="199.85" y="106.35" font-size="6.4" fill="#5f676a" text-anchor="middle" letter-spacing="-0.22">3:20pm</text><line x1="237.48" y1="96.45" x2="237.48" y2="97.95" stroke="#e0e3e3" stroke-width="0.6"/><text x="237.48" y="106.35" font-size="6.4" fill="#5f676a" text-anchor="middle" letter-spacing="-0.22">3:30pm</text><line x1="21.60" y1="14.37" x2="217.60" y2="14.37" stroke="#5dd3ef" stroke-width="1"/></svg>
<svg class="ic" style="left:281.90px;top:389.90px" width="6" height="6" viewBox="0 0 6 6"><circle cx="2.6" cy="2.55" r="2" fill="#5dd3ef"/></svg>
<div class="t" style="left:289.00px;top:389.67px;font-size:6.3px;line-height:6.3px;color:#5f676a;font-weight:400;letter-spacing:0.03px;">maria-db-newrelic</div>
<div class="box" style="left:534.2px;top:233.9px;width:261.8px;height:172.0px;background:#fff;border-radius:3px"></div>
<div class="t" style="left:543.20px;top:244.02px;font-size:7.3px;line-height:7.3px;color:#293338;font-weight:700;letter-spacing:-0.22px;">Storage Used (%)</div>
<svg class="ic" style="left:603.93px;top:242.75px" width="9" height="9" viewBox="0 0 9 9"><circle cx="4.5" cy="4.5" r="3.95" fill="none" stroke="#c9cdcd" stroke-width="0.75"/><path d="M4.4 2.85 V6.5" stroke="#bfc3c3" stroke-width="0.85"/></svg>
<div class="t" style="left:543.20px;top:254.99px;font-size:7.1px;line-height:7.1px;color:#6b7274;font-weight:400;letter-spacing:-0.05px;">Since 1 hour ago</div>
<svg class="ic" style="left:775.20px;top:246.65px" width="10" height="5" viewBox="0 0 10 5"><circle cx="2.6" cy="2.65" r="0.75" fill="#293338"/><circle cx="5.05" cy="2.65" r="0.75" fill="#293338"/><circle cx="7.5" cy="2.65" r="0.75" fill="#293338"/></svg>
<svg class="ic" style="left:543.2px;top:271.9px;font-family:"Liberation Sans", sans-serif" width="244" height="112" viewBox="0 0 244 112"><line x1="0" y1="7.60" x2="243.5" y2="7.60" stroke="#e2e5e5" stroke-width="0.9" stroke-dasharray="1.1 2.23" stroke-dashoffset="0.5"/><text x="0.3" y="5.00" font-size="6.3" fill="#5f676a">3</text><line x1="0" y1="22.33" x2="243.5" y2="22.33" stroke="#e2e5e5" stroke-width="0.9" stroke-dasharray="1.1 2.23" stroke-dashoffset="0.5"/><text x="0.3" y="19.73" font-size="6.3" fill="#5f676a">2.5</text><line x1="0" y1="37.05" x2="243.5" y2="37.05" stroke="#e2e5e5" stroke-width="0.9" stroke-dasharray="1.1 2.23" stroke-dashoffset="0.5"/><text x="0.3" y="34.45" font-size="6.3" fill="#5f676a">2</text><line x1="0" y1="51.77" x2="243.5" y2="51.77" stroke="#e2e5e5" stroke-width="0.9" stroke-dasharray="1.1 2.23" stroke-dashoffset="0.5"/><text x="0.3" y="49.17" font-size="6.3" fill="#5f676a">1.5</text><line x1="0" y1="66.50" x2="243.5" y2="66.50" stroke="#e2e5e5" stroke-width="0.9" stroke-dasharray="1.1 2.23" stroke-dashoffset="0.5"/><text x="0.3" y="63.90" font-size="6.3" fill="#5f676a">1</text><line x1="0" y1="81.22" x2="243.5" y2="81.22" stroke="#e2e5e5" stroke-width="0.9" stroke-dasharray="1.1 2.23" stroke-dashoffset="0.5"/><text x="0.3" y="78.62" font-size="6.3" fill="#5f676a">0.5</text><line x1="0" y1="95.95" x2="243.5" y2="95.95" stroke="#e6e8e8" stroke-width="1"/><text x="0.3" y="93.35" font-size="6.3" fill="#5f676a">0</text><line x1="11.70" y1="96.45" x2="11.70" y2="97.95" stroke="#e0e3e3" stroke-width="0.6"/><text x="11.70" y="106.35" font-size="6.4" fill="#5f676a" text-anchor="middle" letter-spacing="-0.22">2:30pm</text><line x1="49.33" y1="96.45" x2="49.33" y2="97.95" stroke="#e0e3e3" stroke-width="0.6"/><text x="49.33" y="106.35" font-size="6.4" fill="#5f676a" text-anchor="middle" letter-spacing="-0.22">2:40pm</text><line x1="86.96" y1="96.45" x2="86.96" y2="97.95" stroke="#e0e3e3" stroke-width="0.6"/><text x="86.96" y="106.35" font-size="6.4" fill="#5f676a" text-anchor="middle" letter-spacing="-0.22">2:50pm</text><line x1="124.59" y1="96.45" x2="124.59" y2="97.95" stroke="#e0e3e3" stroke-width="0.6"/><text x="124.59" y="106.35" font-size="6.4" fill="#5f676a" text-anchor="middle" letter-spacing="-0.22">3:00pm</text><line x1="162.22" y1="96.45" x2="162.22" y2="97.95" stroke="#e0e3e3" stroke-width="0.6"/><text x="162.22" y="106.35" font-size="6.4" fill="#5f676a" text-anchor="middle" letter-spacing="-0.22">3:10pm</text><line x1="199.85" y1="96.45" x2="199.85" y2="97.95" stroke="#e0e3e3" stroke-width="0.6"/><text x="199.85" y="106.35" font-size="6.4" fill="#5f676a" text-anchor="middle" letter-spacing="-0.22">3:20pm</text><line x1="237.48" y1="96.45" x2="237.48" y2="97.95" stroke="#e0e3e3" stroke-width="0.6"/><text x="237.48" y="106.35" font-size="6.4" fill="#5f676a" text-anchor="middle" letter-spacing="-0.22">3:30pm</text><line x1="21.80" y1="19.90" x2="218.00" y2="19.90" stroke="#9fe0f0" stroke-width="1.3"/></svg>
<svg class="ic" style="left:545.20px;top:389.90px" width="6" height="6" viewBox="0 0 6 6"><circle cx="2.6" cy="2.55" r="2" fill="#5dd3ef"/></svg>
<div class="t" style="left:552.30px;top:389.67px;font-size:6.3px;line-height:6.3px;color:#5f676a;font-weight:400;letter-spacing:0.03px;">maria-db-newrelic</div>
</body></html>
